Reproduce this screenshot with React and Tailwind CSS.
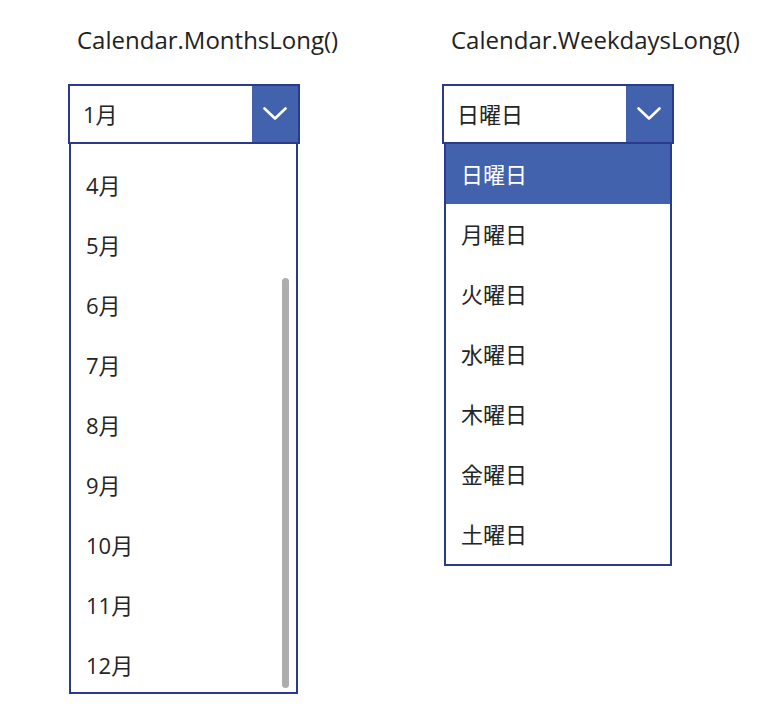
import React from 'react';

const months = ['4月', '5月', '6月', '7月', '8月', '9月', '10月', '11月', '12月'];
const weekdays = ['日曜日', '月曜日', '火曜日', '水曜日', '木曜日', '金曜日', '土曜日'];

const font = { fontFamily: '"Open Sans", "Noto Sans CJK JP", sans-serif' };

function Chevron() {
  return (
    <svg width="24" height="14" viewBox="0 0 24 14" fill="none">
      <path d="M1.5 1.5 L12 11.5 L22.5 1.5" stroke="white" strokeWidth="2.6" strokeLinecap="round" strokeLinejoin="round" />
    </svg>
  );
}

function DropHeader({ value }) {
  return (
    <div className="flex h-[60px] w-[232px] border-2 border-[#2a3a8c] bg-white">
      <div className="flex flex-1 items-center pl-[13px] text-[22px] text-[#252525]">{value}</div>
      <div className="flex w-[46px] items-center justify-center bg-[#4262ad]">
        <Chevron />
      </div>
    </div>
  );
}

function App() {
  return (
    <div className="h-[727px] w-[768px] bg-white" style={font}>
      <div className="flex gap-[142px] pl-[68px] pt-[25px]">
        {/* months column */}
        <div className="flex w-[232px] shrink-0 flex-col">
          <div className="whitespace-nowrap pl-[9px] text-[24px] leading-[30px] text-[#222]">Calendar.MonthsLong()</div>
          <div className="mt-[29px]">
            <DropHeader value="1月" />
            <div className="relative ml-px h-[550px] w-[229px] overflow-hidden border-x-2 border-b-2 border-[#2a3a8c] bg-white">
              <div className="flex flex-col pt-[11px]">
                {months.map((m) => (
                  <div key={m} className="flex h-[60px] shrink-0 items-center pl-[15px] text-[22px] text-[#252525]">
                    {m}
                  </div>
                ))}
              </div>
              <div className="absolute right-[7px] top-[134px] h-[410px] w-[7px] rounded-full bg-[#adadad]"></div>
            </div>
          </div>
        </div>

        {/* weekdays column */}
        <div className="flex w-[232px] shrink-0 flex-col">
          <div className="whitespace-nowrap pl-[9px] text-[24px] leading-[30px] text-[#222]">Calendar.WeekdaysLong()</div>
          <div className="mt-[29px]">
            <DropHeader value="日曜日" />
            <div className="ml-[2px] w-[228px] border-x-2 border-b-2 border-[#2a3a8c] bg-white">
              {weekdays.map((d, i) => (
                <div
                  key={d}
                  className={
                    i === 0
                      ? 'flex h-[60px] items-center bg-[#4262ad] pl-[15px] text-[22px] text-white'
                      : 'flex h-[60px] items-center pl-[15px] text-[22px] text-[#252525]'
                  }
                >
                  {d}
                </div>
              ))}
            </div>
          </div>
        </div>
      </div>
    </div>
  );
}

export default App;
